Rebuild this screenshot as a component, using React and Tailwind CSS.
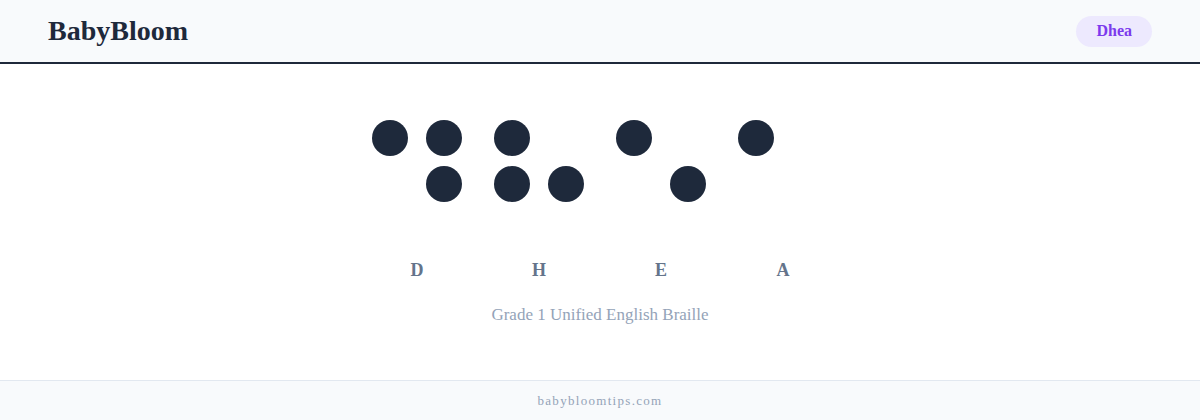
const cells = [
  { letter: 'D', dots: [1, 4, 5] },
  { letter: 'H', dots: [1, 2, 5] },
  { letter: 'E', dots: [1, 5] },
  { letter: 'A', dots: [1] },
]

// braille dot order laid out row by row: 1 4 / 2 5 / 3 6
const order = [1, 4, 2, 5, 3, 6]

function Cell({ letter, dots }) {
  return (
    <div className="flex flex-col items-center">
      <div className="grid grid-cols-[36px_36px] grid-rows-[36px_36px_36px] gap-x-[18px] gap-y-[10px]">
        {order.map(n => (
          <div
            key={n}
            className={dots.includes(n) ? 'w-9 h-9 rounded-full bg-[#1e293b]' : 'w-9 h-9'}
          />
        ))}
      </div>
      <div className="mt-[10px] h-6 leading-6 text-[18px] font-bold text-[#64748b]">{letter}</div>
    </div>
  )
}

export default function App() {
  return (
    <div className="min-h-screen flex flex-col bg-white" style={{ fontFamily: '"Liberation Serif", "DejaVu Serif", serif' }}>
      <header className="h-[64px] flex items-center justify-between px-12 bg-[#f8fafc] border-b-2 border-[#1e293b]">
        <div className="text-[28px] font-bold text-[#1e293b]">BabyBloom</div>
        <div className="h-[31px] px-5 flex items-center rounded-full bg-[#ede9fe] text-[#7c3aed] text-[16px] font-bold">Dhea</div>
      </header>

      <main className="h-[316px] flex flex-col items-center pt-[56px]">
        <div className="flex gap-8">
          {cells.map(c => (
            <Cell key={c.letter} {...c} />
          ))}
        </div>
        <div className="mt-[21px] leading-6 text-[17px] text-[#94a3b8]">Grade 1 Unified English Braille</div>
      </main>

      <footer className="h-[40px] flex items-center justify-center bg-[#f8fafc] border-t border-[#e2e8f0]">
        <span className="text-[13px] tracking-[0.1em] text-[#94a3b8]">babybloomtips.com</span>
      </footer>
    </div>
  )
}
